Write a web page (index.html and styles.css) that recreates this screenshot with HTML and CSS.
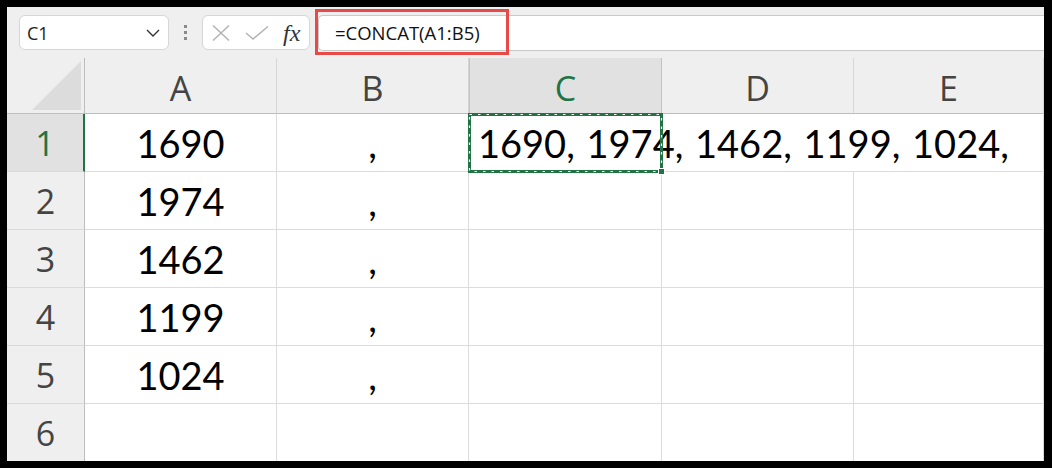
FILE: index.html
```html
<!DOCTYPE html>
<html lang="en">
<head>
  <meta charset="UTF-8" />
  <title>CONCAT - Excel</title>
  <link rel="stylesheet" href="styles.css">
</head>
<body>

<div class="frame">
  <div class="app">

    <div class="toolbar">
      <div class="name-box">
        <span>C1</span>
        <svg class="chevron" width="14" height="8" viewBox="0 0 14 8"><path d="M1 1 L7 7 L13 1" fill="none" stroke="#333" stroke-width="1.4"/></svg>
      </div>
      <div class="grip"><i></i><i></i><i></i></div>
      <div class="fx-box">
        <svg width="18" height="16" viewBox="0 0 18 16"><path d="M1 0.5 L17 15.5 M17 0.5 L1 15.5" stroke="#b4b4b4" stroke-width="1.5" fill="none"/></svg>
        <svg width="24" height="14" viewBox="0 0 24 14"><path d="M1 7 L8 13 L23 0.5" stroke="#b4b4b4" stroke-width="1.5" fill="none"/></svg>
        <span class="fx">fx</span>
      </div>
      <div class="formula">
        <span>=CONCAT(A1:B5)</span>
        <div class="highlight"></div>
      </div>
    </div>

    <div class="sheet">
      <div class="corner"><div class="tri"></div></div>
      <div class="col-head">A</div>
      <div class="col-head">B</div>
      <div class="col-head active">C</div>
      <div class="col-head">D</div>
      <div class="col-head">E</div>

      <div class="row-head active">1</div>
      <div class="cell num">1690</div>
      <div class="cell num">,</div>
      <div class="cell text selected">
        1690, 1974, 1462, 1199, 1024,
        <svg class="ants" width="195" height="60" viewBox="0 0 195 60">
          <rect x="1.5" y="1.5" width="192" height="57" fill="none" stroke="#217346" stroke-width="3"/>
          <rect x="1.5" y="1.5" width="192" height="57" fill="none" stroke="#fff" stroke-width="1.2" stroke-dasharray="2.5 6"/>
        </svg>
        <div class="handle"></div>
      </div>
      <div class="cell no-right"></div>
      <div class="cell"></div>

      <div class="row-head">2</div>
      <div class="cell num">1974</div>
      <div class="cell num">,</div>
      <div class="cell"></div>
      <div class="cell"></div>
      <div class="cell"></div>

      <div class="row-head">3</div>
      <div class="cell num">1462</div>
      <div class="cell num">,</div>
      <div class="cell"></div>
      <div class="cell"></div>
      <div class="cell"></div>

      <div class="row-head">4</div>
      <div class="cell num">1199</div>
      <div class="cell num">,</div>
      <div class="cell"></div>
      <div class="cell"></div>
      <div class="cell"></div>

      <div class="row-head">5</div>
      <div class="cell num">1024</div>
      <div class="cell num">,</div>
      <div class="cell"></div>
      <div class="cell"></div>
      <div class="cell"></div>

      <div class="row-head last">6</div>
      <div class="cell last"></div>
      <div class="cell last"></div>
      <div class="cell last"></div>
      <div class="cell last"></div>
      <div class="cell last"></div>
    </div>

  </div>
</div>

</body>
</html>
```

FILE: styles.css
```css
* {
  box-sizing: border-box;
}

body {
  margin: 0;
  background: #000;
  font-family: 'Open Sans', sans-serif;
}

.frame {
  width: 1052px;
  height: 468px;
  padding: 7px 8px 7px 7px;
}

.app {
  background: #efefef;
  height: 100%;
  overflow: hidden;
}

/* formula bar */
.toolbar {
  height: 51px;
  display: flex;
  align-items: center;
  padding-left: 12px;
}

.name-box {
  width: 150px;
  height: 35px;
  background: #fff;
  border: 1px solid #d6d6d6;
  border-radius: 6px;
  display: flex;
  align-items: center;
  justify-content: space-between;
  padding: 0 8px 0 7px;
  font-size: 18px;
  color: #222;
}

.grip {
  width: 33px;
  display: flex;
  flex-direction: column;
  align-items: center;
  gap: 3px;
}

.grip i {
  width: 3px;
  height: 3px;
  background: #8a8a8a;
}

.fx-box {
  width: 108px;
  height: 35px;
  background: #fff;
  border: 1px solid #d6d6d6;
  border-radius: 6px;
  display: flex;
  align-items: center;
  padding-left: 9px;
  gap: 15px;
}

.fx {
  font-family: 'Liberation Serif', serif;
  font-style: italic;
  font-size: 24px;
  color: #333;
  margin-left: -1px;
  line-height: 1;
}

.formula {
  position: relative;
  flex: 1;
  height: 36px;
  margin-left: 8px;
  background: #fff;
  border: 1px solid #c9c9c9;
  border-right: none;
  border-radius: 5px 0 0 5px;
  display: flex;
  align-items: center;
  padding-left: 16px;
  font-size: 18.5px;
  color: #111;
}

.highlight {
  position: absolute;
  left: -4px;
  top: -7px;
  width: 194px;
  height: 46px;
  border: 3px solid #e84a47;
}

/* grid */
.sheet {
  display: grid;
  grid-template-columns: 78px 192px 192px 193px 192px 190px;
  grid-template-rows: 56px repeat(5, 58px) 57px;
  background: #fff;
}

.corner {
  background: #efefef;
  border-right: 1px solid #bdbdbd;
  border-bottom: 1px solid #bdbdbd;
  position: relative;
}

.tri {
  position: absolute;
  right: 3px;
  bottom: 3px;
  width: 0;
  height: 0;
  border-left: 49px solid transparent;
  border-bottom: 49px solid #dcdcdc;
}

.col-head {
  background: #efefef;
  border-right: 1px solid #d6d6d6;
  border-bottom: 1px solid #bdbdbd;
  display: flex;
  align-items: center;
  justify-content: center;
  font-size: 34px;
  color: #444;
  padding-top: 4px;
}

.col-head.active {
  background: #e1e1e1;
  color: #217346;
  border-left: 1px solid #c3c3c3;
  border-right: 1px solid #c3c3c3;
}

.row-head {
  background: #efefef;
  border-right: 1px solid #bdbdbd;
  border-bottom: 1px solid #dadada;
  display: flex;
  align-items: center;
  justify-content: center;
  font-size: 34px;
  color: #444;
}

.row-head.active {
  background: #e1e1e1;
  color: #217346;
  border-right: 2px solid #217346;
}

.cell {
  border-right: 1px solid #dcdcdc;
  border-bottom: 1px solid #dcdcdc;
  font-family: Lato, 'Open Sans', sans-serif;
  font-size: 38px;
  color: #000;
  display: flex;
  align-items: center;
}

.cell.num {
  justify-content: center;
}

.cell.no-right {
  border-right: none;
}

.cell.last, .row-head.last {
  border-bottom: none;
}

.cell.text {
  position: relative;
  white-space: nowrap;
  padding-left: 9px;
  word-spacing: 2px;
  overflow: visible;
  z-index: 1;
}

.ants {
  position: absolute;
  left: -1px;
  top: -1px;
}

.handle {
  position: absolute;
  right: -4px;
  bottom: -4px;
  width: 7px;
  height: 7px;
  background: #217346;
  border: 1px solid #fff;
}
```
